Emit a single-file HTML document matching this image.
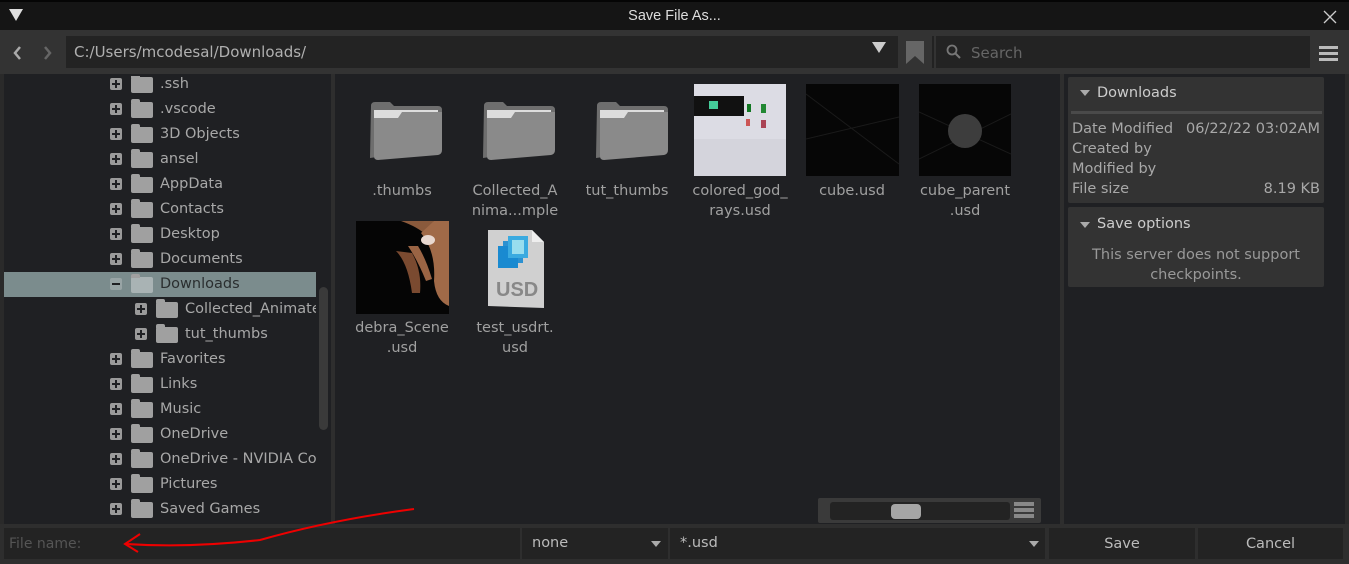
<!DOCTYPE html>
<html><head><meta charset="utf-8"><style>
*{margin:0;padding:0;box-sizing:border-box}
body{width:1349px;height:564px;background:#2a2a2a;font-family:"DejaVu Sans","Liberation Sans",sans-serif;color:#a8a8a8;position:relative;overflow:hidden;font-size:14px}
.a{position:absolute}
.title{left:0;top:0;width:1349px;height:30px;background:#151515;border-top:2px solid #050505}
.tb{left:0;top:30px;width:1349px;height:44px;background:#333}
.field{background:#232323}
.pane{background:#1f2023}
.row{position:absolute;left:0;height:25px;width:316px;line-height:25px;white-space:nowrap;overflow:hidden}
.pl{position:absolute;top:6px;width:12px;height:12px;background:#9a9a9a;border-radius:2px}
.pl::before{content:"";position:absolute;left:2px;top:5px;width:8px;height:2px;background:#1f2023}
.pl::after{content:"";position:absolute;left:5px;top:2px;width:2px;height:8px;background:#1f2023}
.mn::after{display:none}
.fd{position:absolute;top:5px;width:22px;height:16px;background:#a0a0a0;border-radius:2px}
.fd::before{content:"";position:absolute;left:0;top:-3px;width:9px;height:4px;background:#a0a0a0;border-radius:2px 2px 0 0}
.tx{position:absolute;top:0;font-size:14.5px;color:#a8a8a8}
.lab{position:absolute;text-align:center;font-size:14.5px;line-height:20px;color:#a0a0a0;width:110px}
.ip{font-size:14.5px;line-height:20px}
</style></head><body>
<div class="a title">
<svg class="a" style="left:9px;top:7px" width="14" height="12"><polygon points="0,0 14,0 7,12" fill="#ddd"/></svg>
<div class="a" style="left:0;width:1349px;top:6px;text-align:center;color:#ddd;font-size:14.5px;font-family:'Liberation Sans',sans-serif">Save File As...</div>
<svg class="a" style="left:1323px;top:8px" width="14" height="14"><path d="M1 1L13 13M13 1L1 13" stroke="#ccc" stroke-width="1.3"/></svg>
</div>
<div class="a tb">
<svg class="a" style="left:13px;top:16px" width="10" height="14"><path d="M7 1L2 7L7 13" stroke="#aaa" stroke-width="2.5" fill="none"/></svg>
<svg class="a" style="left:43px;top:16px" width="10" height="14"><path d="M2 1L7 7L2 13" stroke="#666" stroke-width="2.5" fill="none"/></svg>
<div class="a field" style="left:66px;top:6px;width:832px;height:32px"></div>
<div class="a" style="left:74px;top:13px;font-size:15px;color:#b0b0b0">C:/Users/mcodesal/Downloads/</div>
<svg class="a" style="left:872px;top:12px" width="14" height="11"><polygon points="0,0 14,0 7,11" fill="#ccc"/></svg>
<svg class="a" style="left:906px;top:11px" width="18" height="24"><polygon points="0,0 18,0 18,23 9,15 0,23" fill="#666"/></svg>
<div class="a" style="left:932px;top:6px;width:2px;height:32px;background:#222"></div>
<div class="a field" style="left:936px;top:6px;width:374px;height:32px"></div>
<svg class="a" style="left:946px;top:14px" width="16" height="16"><circle cx="6" cy="6" r="4.5" stroke="#777" stroke-width="1.8" fill="none"/><path d="M9.5 9.5L14 14" stroke="#777" stroke-width="2"/></svg>
<div class="a" style="left:971px;top:14px;font-size:15px;color:#666">Search</div>
<div class="a" style="left:1319px;top:16px;width:19px;height:3px;background:#bbb;box-shadow:0 6px 0 #bbb,0 12px 0 #bbb"></div>
</div>
<div class="a pane" style="left:4px;top:74px;width:327px;height:450px;overflow:hidden">
<div class="row" style="top:198px;width:312px;background:#7b8c8d"></div>
<div class="a" style="left:315px;top:213px;width:9px;height:143px;background:#3a3a3a;border-radius:5px"></div>
</div>
<div class="a" style="left:331px;top:74px;width:4px;height:450px;background:#2e2e2e"></div>
<div class="a pane" style="left:335px;top:74px;width:725px;height:450px"></div>
<div class="a" style="left:1060px;top:74px;width:4px;height:450px;background:#2e2e2e"></div>
<div class="a pane" style="left:1064px;top:74px;width:281px;height:450px"></div>

<div class="a" style="left:4px;top:76px;width:312px;height:448px;overflow:hidden">
<div class="row" style="top:-4px"><div class="pl" style="left:106px"></div><div class="fd" style="left:127px"></div><div class="tx" style="left:156px">.ssh</div></div>
<div class="row" style="top:21px"><div class="pl" style="left:106px"></div><div class="fd" style="left:127px"></div><div class="tx" style="left:156px">.vscode</div></div>
<div class="row" style="top:46px"><div class="pl" style="left:106px"></div><div class="fd" style="left:127px"></div><div class="tx" style="left:156px">3D Objects</div></div>
<div class="row" style="top:71px"><div class="pl" style="left:106px"></div><div class="fd" style="left:127px"></div><div class="tx" style="left:156px">ansel</div></div>
<div class="row" style="top:96px"><div class="pl" style="left:106px"></div><div class="fd" style="left:127px"></div><div class="tx" style="left:156px">AppData</div></div>
<div class="row" style="top:121px"><div class="pl" style="left:106px"></div><div class="fd" style="left:127px"></div><div class="tx" style="left:156px">Contacts</div></div>
<div class="row" style="top:146px"><div class="pl" style="left:106px"></div><div class="fd" style="left:127px"></div><div class="tx" style="left:156px">Desktop</div></div>
<div class="row" style="top:171px"><div class="pl" style="left:106px"></div><div class="fd" style="left:127px"></div><div class="tx" style="left:156px">Documents</div></div>
<div class="row" style="top:196px"><div class="pl mn" style="left:106px;background:#98a4a5"></div><div class="fd" style="left:127px;background:#a9b3b4"></div><div class="tx" style="left:156px;color:#2a2e2f">Downloads</div></div>
<div class="row" style="top:221px"><div class="pl" style="left:131px"></div><div class="fd" style="left:152px"></div><div class="tx" style="left:181px">Collected_Animate</div></div>
<div class="row" style="top:246px"><div class="pl" style="left:131px"></div><div class="fd" style="left:152px"></div><div class="tx" style="left:181px">tut_thumbs</div></div>
<div class="row" style="top:271px"><div class="pl" style="left:106px"></div><div class="fd" style="left:127px"></div><div class="tx" style="left:156px">Favorites</div></div>
<div class="row" style="top:296px"><div class="pl" style="left:106px"></div><div class="fd" style="left:127px"></div><div class="tx" style="left:156px">Links</div></div>
<div class="row" style="top:321px"><div class="pl" style="left:106px"></div><div class="fd" style="left:127px"></div><div class="tx" style="left:156px">Music</div></div>
<div class="row" style="top:346px"><div class="pl" style="left:106px"></div><div class="fd" style="left:127px"></div><div class="tx" style="left:156px">OneDrive</div></div>
<div class="row" style="top:371px"><div class="pl" style="left:106px"></div><div class="fd" style="left:127px"></div><div class="tx" style="left:156px">OneDrive - NVIDIA Co</div></div>
<div class="row" style="top:396px"><div class="pl" style="left:106px"></div><div class="fd" style="left:127px"></div><div class="tx" style="left:156px">Pictures</div></div>
<div class="row" style="top:421px"><div class="pl" style="left:106px"></div><div class="fd" style="left:127px"></div><div class="tx" style="left:156px">Saved Games</div></div>
</div>

<svg class="a" style="left:368px;top:100px" width="350" height="65">
<defs><g id="fo"><path d="M3 6Q3 2 7 2H22L26 6H70Q74 6 74 10V48L2 58Z" fill="#6e6e6e"/><path d="M6 10H70V50L6 56Z" fill="#ddd"/><path d="M6 18H30L34 12H74V50Q74 54 70 55L10 60Q6 60 6 56Z" fill="#8a8a8a"/></g></defs>
<use href="#fo"/><use href="#fo" x="113"/><use href="#fo" x="226"/>
</svg>
<div class="lab" style="left:347px;top:181px">.thumbs</div>
<div class="lab" style="left:460px;top:181px">Collected_A<br>nima...mple</div>
<div class="lab" style="left:572px;top:181px">tut_thumbs</div>
<div class="lab" style="left:685px;top:181px">colored_god_<br>rays.usd</div>
<div class="lab" style="left:797px;top:181px">cube.usd</div>
<div class="lab" style="left:910px;top:181px">cube_parent<br>.usd</div>
<div class="lab" style="left:347px;top:318px">debra_Scene<br>.usd</div>
<div class="lab" style="left:460px;top:318px">test_usdrt.<br>usd</div>
<svg class="a" style="left:694px;top:84px" width="92" height="92"><rect width="92" height="92" fill="#dcdce4"/><rect x="0" y="12" width="50" height="20" fill="#111"/><rect x="15" y="17" width="9" height="8" fill="#4c9"/><rect x="53" y="20" width="4" height="8" fill="#172"/><rect x="67" y="20" width="5" height="9" fill="#283"/><rect x="52" y="35" width="4" height="7" fill="#c55"/><rect x="67" y="36" width="5" height="8" fill="#a45"/><rect x="0" y="55" width="92" height="37" fill="#d4d4dc"/></svg>
<svg class="a" style="left:806px;top:84px" width="93" height="92"><rect width="93" height="92" fill="#060606"/><path d="M0 55L93 33M0 10L93 80" stroke="#1a1a1a"/></svg>
<svg class="a" style="left:919px;top:84px" width="92" height="92"><rect width="92" height="92" fill="#060606"/><path d="M0 28L92 70M0 75L92 30" stroke="#1a1a1a"/><circle cx="46" cy="47" r="17" fill="#3d3d3d"/></svg>
<svg class="a" style="left:356px;top:221px" width="93" height="93"><rect width="93" height="93" fill="#050505"/><path d="M45 0Q62 6 70 14L78 0Z" fill="#8a5a3c"/><path d="M65 12Q80 30 78 60Q80 80 93 85V0H78Z" fill="#a06a48"/><path d="M40 30Q52 42 56 72L64 72Q66 50 56 32Z" fill="#7a4a30"/><path d="M52 25Q62 40 70 60L76 58Q70 38 62 25Z" fill="#9a6444"/><ellipse cx="72" cy="19" rx="7" ry="5" fill="#e8d8d0"/></svg>
<svg class="a" style="left:486px;top:226px" width="60" height="84"><path d="M2 4H46L58 16V82L2 80Z" fill="#d0d0d0"/><path d="M46 4V16H58Z" fill="#eee"/><rect x="12" y="20" width="20" height="22" fill="#1a8ad0"/><rect x="17" y="15" width="20" height="22" fill="#1a8ad0" opacity=".9"/><rect x="22" y="10" width="20" height="22" fill="#3aaae0"/><rect x="26" y="14" width="12" height="14" fill="#9de"/><text x="10" y="70" font-family="Liberation Sans" font-weight="bold" font-size="20" fill="#888">USD</text></svg>

<div class="a" style="left:818px;top:498px;width:223px;height:25px;background:#3a3a3a;border-radius:2px"></div>
<div class="a" style="left:830px;top:502px;width:180px;height:18px;background:#232323;border-radius:3px"></div>
<div class="a" style="left:891px;top:504px;width:30px;height:15px;background:#a5a5a5;border-radius:4px"></div>
<div class="a" style="left:1014px;top:502px;width:20px;height:4px;background:#888;box-shadow:0 6px 0 #888,0 12px 0 #888"></div>

<div class="a" style="left:1068px;top:77px;width:256px;height:126px;background:#333;border-radius:2px"></div>
<svg class="a" style="left:1080px;top:90px" width="10" height="7"><polygon points="0,0 10,0 5,6" fill="#aaa"/></svg>
<div class="a" style="left:1097px;top:85px;color:#ccc;font-size:14.5px">Downloads</div>
<div class="a" style="left:1071px;top:111px;width:251px;height:3px;background:#4a4a4a"></div>
<div class="a ip" style="left:1072px;top:119px">Date Modified</div>
<div class="a ip" style="left:1172px;top:119px;width:148px;text-align:right">06/22/22 03:02AM</div>
<div class="a ip" style="left:1072px;top:139px">Created by</div>
<div class="a ip" style="left:1072px;top:159px">Modified by</div>
<div class="a ip" style="left:1072px;top:179px">File size</div>
<div class="a ip" style="left:1172px;top:179px;width:148px;text-align:right">8.19 KB</div>
<div class="a" style="left:1068px;top:207px;width:256px;height:80px;background:#333;border-radius:2px"></div>
<svg class="a" style="left:1080px;top:222px" width="10" height="7"><polygon points="0,0 10,0 5,6" fill="#aaa"/></svg>
<div class="a" style="left:1097px;top:216px;color:#ccc;font-size:14.5px">Save options</div>
<div class="a ip" style="left:1068px;top:245px;width:256px;text-align:center;color:#999">This server does not support<br>checkpoints.</div>

<div class="a" style="left:0;top:524px;width:1349px;height:40px;background:#2e2e2e"></div>
<div class="a field" style="left:4px;top:528px;width:516px;height:31px"></div>
<div class="a" style="left:9px;top:536px;color:#555;font-size:14px">File name:</div>
<div class="a field" style="left:522px;top:528px;width:146px;height:31px"></div>
<div class="a" style="left:532px;top:535px;font-size:14.5px;color:#bbb">none</div>
<svg class="a" style="left:651px;top:541px" width="10" height="7"><polygon points="0,0 10,0 5,6" fill="#aaa"/></svg>
<div class="a field" style="left:670px;top:528px;width:375px;height:31px"></div>
<div class="a" style="left:680px;top:535px;font-size:14.5px;color:#bbb">*.usd</div>
<svg class="a" style="left:1029px;top:541px" width="10" height="7"><polygon points="0,0 10,0 5,6" fill="#aaa"/></svg>
<div class="a field" style="left:1049px;top:528px;width:146px;height:31px;text-align:center;line-height:33px;font-size:14.5px;color:#bbb">Save</div>
<div class="a field" style="left:1198px;top:528px;width:145px;height:31px;text-align:center;line-height:33px;font-size:14.5px;color:#bbb">Cancel</div>

<svg class="a" style="left:0;top:0" width="1349" height="564"><path d="M414 509Q330 520 260 540Q190 548 126 544" stroke="#e00" stroke-width="2" fill="none"/><path d="M140 534L125 544L138 552" stroke="#e00" stroke-width="2" fill="none"/></svg>
</body></html>
